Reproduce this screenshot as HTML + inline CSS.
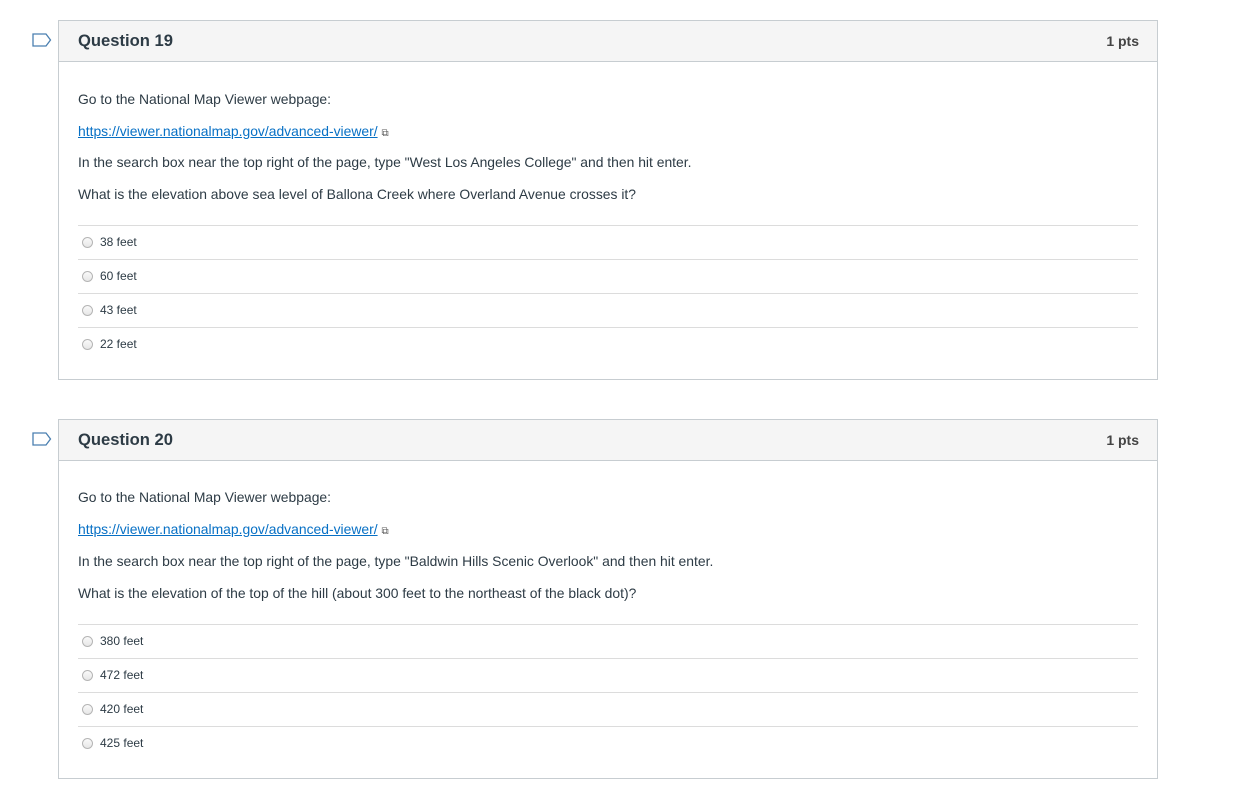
<!DOCTYPE html>
<html><head><meta charset="utf-8"><style>
body{margin:0;background:#fff;font-family:"Liberation Sans",sans-serif;color:#2d3b45;width:1245px;height:806px;position:relative;overflow:hidden}
.q{position:absolute;left:58px;width:1098px;height:358px;border:1px solid #c7cdd1;}
.hd{height:40px;background:#f5f5f5;border-bottom:1px solid #c7cdd1;position:relative}
.hd .t{position:absolute;left:19px;top:10px;font-size:16.6px;font-weight:bold}
.hd .p{position:absolute;right:18px;top:12px;font-size:14px;font-weight:bold;color:#444}
.l{position:absolute;left:19px;font-size:13.9px;white-space:nowrap}
.l a{color:#0770c5;text-decoration:underline}
.opts{position:absolute;left:19px;width:1060px}
.o{height:33px;border-top:1px solid #dcdcdc;position:relative;font-size:12px}
.o span.r{position:absolute;left:4px;top:11px;width:9px;height:9px;border-radius:50%;border:1px solid #b5b5b5;background:linear-gradient(#fafafa,#e6e6e6)}
.o span.x{position:absolute;left:22px;top:9px}
.flag{position:absolute;left:32px}
</style></head><body>

<svg class="flag" style="top:33px" width="20" height="14"><path d="M1 1H14L18.5 7L14 13H1Z" fill="none" stroke="#4a7fb0" stroke-width="1.3"/></svg>
<div class="q" style="top:20px">
<div class="hd"><span class="t">Question 19</span><span class="p">1 pts</span></div>
<div class="l" style="top:70px">Go to the National Map Viewer webpage:</div>
<div class="l" style="top:102px"><a>https://viewer.nationalmap.gov/advanced-viewer/</a> <span style="font-size:10px;color:#555">⧉</span></div>
<div class="l" style="top:133px">In the search box near the top right of the page, type "West Los Angeles College" and then hit enter.</div>
<div class="l" style="top:165px">What is the elevation above sea level of Ballona Creek where Overland Avenue crosses it?</div>
<div class="opts" style="top:204px">
<div class="o"><span class="r"></span><span class="x">38 feet</span></div>
<div class="o"><span class="r"></span><span class="x">60 feet</span></div>
<div class="o"><span class="r"></span><span class="x">43 feet</span></div>
<div class="o"><span class="r"></span><span class="x">22 feet</span></div>
</div>
</div>

<svg class="flag" style="top:432px" width="20" height="14"><path d="M1 1H14L18.5 7L14 13H1Z" fill="none" stroke="#4a7fb0" stroke-width="1.3"/></svg>
<div class="q" style="top:419px">
<div class="hd"><span class="t">Question 20</span><span class="p">1 pts</span></div>
<div class="l" style="top:69px">Go to the National Map Viewer webpage:</div>
<div class="l" style="top:101px"><a>https://viewer.nationalmap.gov/advanced-viewer/</a> <span style="font-size:10px;color:#555">⧉</span></div>
<div class="l" style="top:133px">In the search box near the top right of the page, type "Baldwin Hills Scenic Overlook" and then hit enter.</div>
<div class="l" style="top:165px">What is the elevation of the top of the hill (about 300 feet to the northeast of the black dot)?</div>
<div class="opts" style="top:204px">
<div class="o"><span class="r"></span><span class="x">380 feet</span></div>
<div class="o"><span class="r"></span><span class="x">472 feet</span></div>
<div class="o"><span class="r"></span><span class="x">420 feet</span></div>
<div class="o"><span class="r"></span><span class="x">425 feet</span></div>
</div>
</div>
</body></html>
